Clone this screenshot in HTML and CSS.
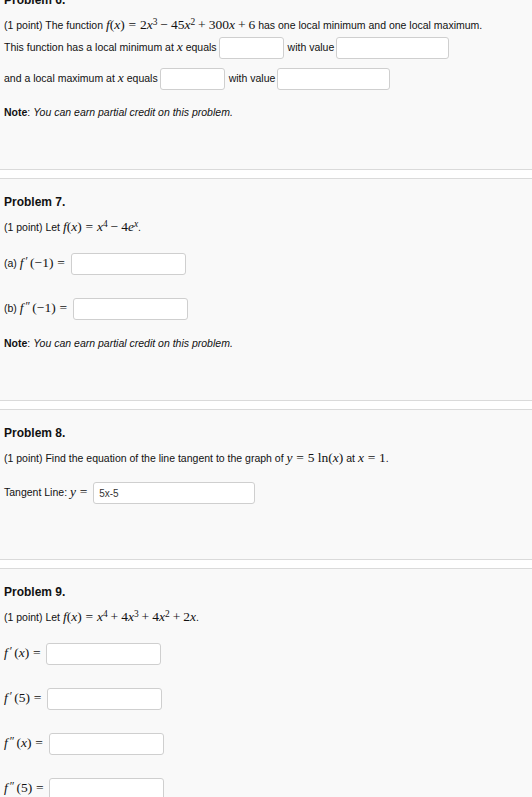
FILE: index.html
```html
<!DOCTYPE html>
<html>
<head>
	<meta charset="UTF-8">
	<title>Problems</title>
	<link rel="stylesheet" href="styles.css">
</head>
<body>
	<div class="problem first">
		<div class="title">Problem 6.</div>
		<div class="row sub">(1 point) The function <span class="m"><var>f</var>(<var>x</var>)<span class="rel">=</span>2<var>x</var><sup>3</sup><span class="bin">−</span>45<var>x</var><sup>2</sup><span class="bin">+</span>300<var>x</var><span class="bin">+</span>6</span> has one local minimum and one local maximum.</div>
		<div class="row">This function has a local minimum at <span class="m"><var>x</var></span> equals<input class="ans w65" type="text">with value<input class="ans w113" type="text"></div>
		<div class="row gap9">and a local maximum at <span class="m"><var>x</var></span> equals<input class="ans w65" type="text">with value<input class="ans w113" type="text"></div>
		<div class="row gap12 note"><b>Note</b>: <i>You can earn partial credit on this problem.</i></div>
	</div>

	<div class="problem">
		<div class="title">Problem 7.</div>
		<div class="row sub">(1 point) Let <span class="m"><var>f</var>(<var>x</var>)<span class="rel">=</span><var>x</var><sup>4</sup><span class="bin">−</span>4<var>e</var><sup><var>x</var></sup></span>.</div>
		<div class="row gap12">(a) <span class="m"><var>f</var><span class="pr">′</span>(−1)<span class="rel">=</span></span><input class="ans w115" type="text"></div>
		<div class="row gap23">(b) <span class="m"><var>f</var><span class="pr">″</span>(−1)<span class="rel">=</span></span><input class="ans w115" type="text"></div>
		<div class="row gap15 note"><b>Note</b>: <i>You can earn partial credit on this problem.</i></div>
	</div>

	<div class="problem">
		<div class="title">Problem 8.</div>
		<div class="row sub">(1 point) Find the equation of the line tangent to the graph of <span class="m"><var>y</var><span class="rel">=</span>5 ln(<var>x</var>)</span> at <span class="m"><var>x</var><span class="rel">=</span>1</span>.</div>
		<div class="row gap12">Tangent Line: <span class="m"><var>y</var><span class="rel">=</span></span><input class="ans w162" type="text" value="5x-5"></div>
	</div>

	<div class="problem">
		<div class="title">Problem 9.</div>
		<div class="row sub">(1 point) Let <span class="m"><var>f</var>(<var>x</var>)<span class="rel">=</span><var>x</var><sup>4</sup><span class="bin">+</span>4<var>x</var><sup>3</sup><span class="bin">+</span>4<var>x</var><sup>2</sup><span class="bin">+</span>2<var>x</var></span>.</div>
		<div class="row gap12"><span class="m"><var>f</var><span class="pr">′</span>(<var>x</var>)<span class="rel">=</span></span><input class="ans w115" type="text"></div>
		<div class="row gap23"><span class="m"><var>f</var><span class="pr">′</span>(5)<span class="rel">=</span></span><input class="ans w115" type="text"></div>
		<div class="row gap23"><span class="m"><var>f</var><span class="pr">″</span>(<var>x</var>)<span class="rel">=</span></span><input class="ans w115" type="text"></div>
		<div class="row gap23"><span class="m"><var>f</var><span class="pr">″</span>(5)<span class="rel">=</span></span><input class="ans w115" type="text"></div>
	</div>
</body>
</html>
```

FILE: styles.css
```css
*{
	padding: 0;
	margin: 0;
	box-sizing: border-box;
}
body{
	background: #fff;
	color: #111;
	font-family: "Liberation Sans", Arial, sans-serif;
	font-size: 10.5px;
	overflow: hidden;
}
.problem{
	background: #f9f9f9;
	border-top: 1px solid #dadada;
	border-bottom: 1px solid #dadada;
	padding: 12px 4px 46px;
	margin-bottom: 8px;
}
.first{
	margin-top: -24px;
}
.title{
	height: 22px;
	line-height: 22px;
	font-size: 12px;
	font-weight: bold;
}
.row{
	height: 22px;
	line-height: 22px;
	white-space: nowrap;
}
.sub{
	margin-top: 3px;
}
.gap9{
	margin-top: 9px;
}
.gap12{
	margin-top: 12px;
}
.gap15{
	margin-top: 15px;
}
.gap23{
	margin-top: 23px;
}
.problem:nth-child(3){
	padding-bottom: 56px;
}
.m{
	font-family: "Liberation Serif", "Times New Roman", serif;
	font-size: 13.5px;
}
.m var{
	font-style: italic;
}
.m sup{
	font-size: 70%;
	line-height: 0;
	vertical-align: 0.45em;
}
.pr{
	font-size: 85%;
	margin: 0 2px 0 2px;
	vertical-align: 0.15em;
}
.rel{
	margin: 0 0.28em;
}
.bin{
	margin: 0 0.22em;
}
.ans{
	height: 22px;
	vertical-align: middle;
	border: 1px solid #cfcfcf;
	border-radius: 3px;
	background: #fff;
	margin: 0 4px 0 2px;
	padding: 0 5px;
	font-family: "Liberation Sans", Arial, sans-serif;
	font-size: 10px;
	color: #333;
	outline: none;
}
.w65{
	width: 65px;
}
.w113{
	width: 113px;
}
.w115{
	width: 115px;
}
.w162{
	width: 162px;
}
```
